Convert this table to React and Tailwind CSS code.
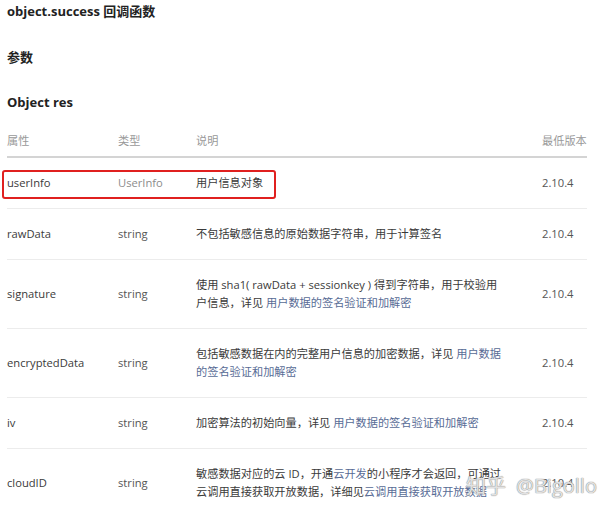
import React from "react";

const Link = ({ children }) => <span className="text-[#576b95]">{children}</span>;

const rows = [
  { name: "userInfo", type: "UserInfo", typeColor: "text-[#8c8c8c]", desc: "用户信息对象" },
  { name: "rawData", type: "string", desc: "不包括敏感信息的原始数据字符串，用于计算签名" },
  {
    name: "signature",
    type: "string",
    desc: (
      <>
        使用 sha1( rawData + sessionkey ) 得到字符串，用于校验用户信息，详见 <Link>用户数据的签名验证和加解密</Link>
      </>
    ),
  },
  {
    name: "encryptedData",
    type: "string",
    desc: (
      <>
        包括敏感数据在内的完整用户信息的加密数据，详见 <Link>用户数据的签名验证和加解密</Link>
      </>
    ),
  },
  {
    name: "iv",
    type: "string",
    desc: (
      <>
        加密算法的初始向量，详见 <Link>用户数据的签名验证和加解密</Link>
      </>
    ),
  },
  {
    name: "cloudID",
    type: "string",
    desc: (
      <>
        敏感数据对应的云 ID，开通<Link>云开发</Link>的小程序才会返回，可通过云调用直接获取开放数据，详细见<Link>云调用直接获取开放数据</Link>
      </>
    ),
  },
];

export default function App() {
  return (
    <div className="relative w-[600px] h-[516px] overflow-hidden bg-white text-[#3a3a3a] font-['Open_Sans','Noto_Sans_CJK_SC',sans-serif]">
      <div className="pl-[7px] pr-[13px] pt-[2px]">
        <div className="text-[13px] leading-[18px] font-bold text-[#222]">object.success 回调函数</div>
        <div className="mt-[28px] text-[13px] leading-[18px] font-bold text-[#222]">参数</div>
        <div className="mt-[27px] text-[13px] leading-[18px] font-bold text-[#222]">Object res</div>

        <div className="mt-[21px] text-[11.2px] leading-[18px]">
          <div className="grid grid-cols-[111px_78px_346px_45px] border-b-2 border-[#d4d4d4] pb-[6px] text-[#999]">
            <div>属性</div>
            <div>类型</div>
            <div>说明</div>
            <div className="whitespace-nowrap">最低版本</div>
          </div>
          {rows.map((r) => (
            <div
              key={r.name}
              className="grid grid-cols-[111px_78px_346px_45px] items-center border-b border-[#ececec] py-[16px]"
            >
              <div>{r.name}</div>
              <div className={r.typeColor || "text-[#555]"}>{r.type}</div>
              <div className="pr-[34px]">{r.desc}</div>
              <div className="whitespace-nowrap text-[#555]">2.10.4</div>
            </div>
          ))}
        </div>
      </div>

      <div className="absolute left-[2px] top-[170px] w-[274px] h-[29px] rounded-[3px] border-2 border-[#e0201f]" />

      <div className="absolute left-[466px] top-[474px] flex items-center gap-[10px] text-[20px] leading-[24px] text-[rgba(255,255,255,0.75)] [text-shadow:0_0_1px_#8a8a8a,0_0_1px_#8a8a8a]">
        <span className="font-['Noto_Sans_CJK_SC',sans-serif]">知乎</span>
        <span className="font-['Open_Sans',sans-serif]">@Bigollo</span>
      </div>
    </div>
  );
}
